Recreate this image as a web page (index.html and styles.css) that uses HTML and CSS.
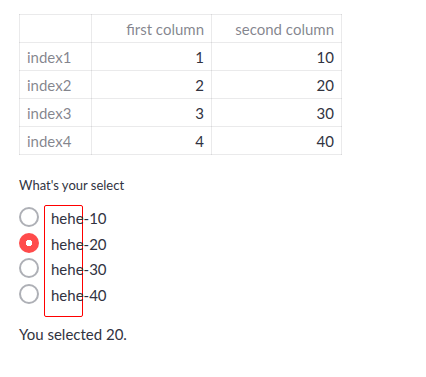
FILE: index.html
```html
<!DOCTYPE html>
<html lang="en">
<head>
    <meta charset="UTF-8">
    <title>Table and radio</title>
    <link rel="stylesheet" href="styles.css">
</head>
<body>
    <main class="page">
        <table class="data-table">
            <thead>
                <tr>
                    <th class="blank"></th>
                    <th>first column</th>
                    <th>second column</th>
                </tr>
            </thead>
            <tbody>
                <tr><th>index1</th><td>1</td><td>10</td></tr>
                <tr><th>index2</th><td>2</td><td>20</td></tr>
                <tr><th>index3</th><td>3</td><td>30</td></tr>
                <tr><th>index4</th><td>4</td><td>40</td></tr>
            </tbody>
        </table>

        <div class="radio-group">
            <p class="radio-title">What's your select</p>
            <div class="radio-body">
                <div class="radio-dots">
                    <span class="dot"></span>
                    <span class="dot checked"></span>
                    <span class="dot"></span>
                    <span class="dot"></span>
                </div>
                <div class="radio-labels">
                    <span class="radio-label">hehe-10</span>
                    <span class="radio-label">hehe-20</span>
                    <span class="radio-label">hehe-30</span>
                    <span class="radio-label">hehe-40</span>
                </div>
            </div>
        </div>

        <p class="result">You selected 20.</p>
    </main>
</body>
</html>
```

FILE: styles.css
```css
:root {
    --text: #31333f;
    --text-muted: rgba(49, 51, 63, 0.6);
    --border: rgba(49, 51, 63, 0.1);
    --accent: #ff4b4b;
}

* {
    margin: 0;
    padding: 0;
    box-sizing: border-box;
}

body {
    font-family: 'Lato', 'Noto Sans', sans-serif;
    color: var(--text);
    background: #ffffff;
}

.page {
    padding: 14px 19px;
}

.data-table {
    border-collapse: collapse;
    font-size: 15px;
}

.data-table th,
.data-table td {
    border: 1px solid var(--border);
    height: 28px;
    padding: 0 7px 0 7px;
    font-weight: 400;
    text-align: right;
}

.data-table thead th {
    color: var(--text-muted);
}

.data-table th.blank {
    width: 72px;
}

.data-table thead th:nth-child(2) {
    width: 120px;
}

.data-table thead th:nth-child(3) {
    width: 130px;
}

.data-table tbody th {
    text-align: left;
    color: var(--text-muted);
}

.radio-group {
    margin-top: 20px;
}

.radio-title {
    font-size: 13px;
    line-height: 20px;
    margin-bottom: 10px;
}

.radio-body {
    display: flex;
    align-items: flex-start;
}

.radio-dots {
    display: flex;
    flex-direction: column;
    gap: 5.5px;
    padding-top: 2px;
}

.dot {
    width: 20px;
    height: 20px;
    border-radius: 50%;
    border: 2px solid #aeb0b6;
    background: #ffffff;
}

.dot.checked {
    border: none;
    background: radial-gradient(circle, #ffffff 0 3px, var(--accent) 3.5px);
}

.radio-labels {
    display: flex;
    flex-direction: column;
    width: 39px;
    height: 112px;
    margin-left: 5px;
    border: 1px solid #ff0000;
    border-radius: 2px;
    white-space: nowrap;
}

.radio-label {
    font-size: 15px;
    line-height: 25.5px;
    padding-left: 6px;
}

.result {
    margin-top: 5px;
    font-size: 15px;
    line-height: 24px;
}
```
